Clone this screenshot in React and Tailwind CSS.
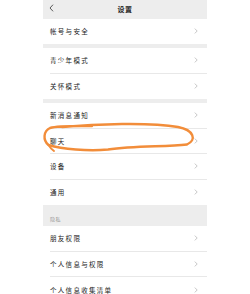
import React from 'react';

const font = { fontFamily: '"Noto Sans CJK SC", "Noto Sans", sans-serif' };

const Chevron = () => (
  <svg width="4" height="6" viewBox="0 0 4 6" className="shrink-0">
    <path d="M0.8 0.6 L3.2 3 L0.8 5.4" fill="none" stroke="#b8b8b8" strokeWidth="0.8" />
  </svg>
);

const Row = ({ label, last }) => (
  <div className="h-[25.5px] bg-white pl-[7px]">
    <div className={`flex h-full items-center justify-between pr-[9px] ${last ? '' : 'border-b-[0.5px] border-[#e8e8e8]'}`}>
      <span className="text-[6.5px] leading-none tracking-[1.3px] text-[#222]">{label}</span>
      <Chevron />
    </div>
  </div>
);

const Gap = () => <div className="h-[4px] bg-[#ededed]" />;

export default function App() {
  return (
    <div className="flex h-[294px] w-[250px] justify-center overflow-hidden bg-white" style={font}>
      <div className="relative w-[164px]">
        {/* header */}
        <div className="relative flex h-[18.7px] items-center justify-center bg-[#ededed]">
          <svg width="5" height="8" viewBox="0 0 5 8" className="absolute left-[6px] top-[4px]">
            <path d="M4 0.7 L1 4 L4 7.3" fill="none" stroke="#333" strokeWidth="0.8" />
          </svg>
          <span className="text-[7px] font-bold leading-none tracking-[0.4px] text-[#222]">设置</span>
        </div>

        <Row label="帐号与安全" last />
        <Gap />
        <Row label="青少年模式" />
        <Row label="关怀模式" last />
        <Gap />
        <Row label="新消息通知" />
        <Row label="聊天" />
        <Row label="设备" />
        <Row label="通用" last />

        <div className="flex h-[21px] items-end bg-[#ededed] pb-[5px] pl-[7px]">
          <span className="text-[5px] leading-none tracking-[0.5px] text-[#999]">隐私</span>
        </div>

        <Row label="朋友权限" />
        <Row label="个人信息与权限" />
        <Row label="个人信息收集清单" last />

        {/* hand-drawn highlight */}
        <svg
          width="250"
          height="294"
          viewBox="0 0 250 294"
          className="pointer-events-none absolute left-[-43px] top-0"
        >
          <path
            d="M62 127 C95 124 150 122 178 127 C194 130 197 140 187 144.5 C165 147 135 145.5 108 149.5 C88 151.5 62 149 48.5 145 C42.5 140 43.5 131 50 128 C58 125.5 75 126 92 126"
            fill="none"
            stroke="#f28d3a"
            strokeWidth="2.4"
            strokeLinecap="round"
          />
          <path d="M48.5 145 C50 147.5 52 149.5 54 151" fill="none" stroke="#f28d3a" strokeWidth="2" strokeLinecap="round" />
        </svg>
      </div>
    </div>
  );
}
